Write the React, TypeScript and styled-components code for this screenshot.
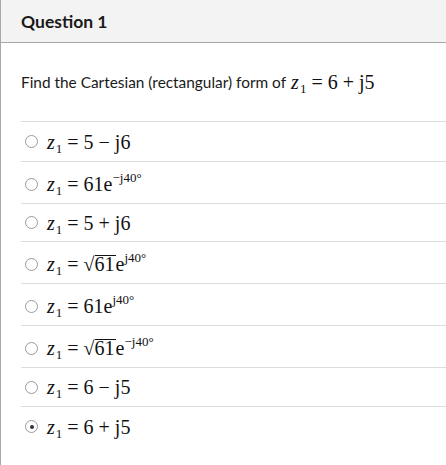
import React from "react";
import styled, { createGlobalStyle } from "styled-components";

const MATH_FONT = '"Liberation Serif", "Times New Roman", serif';
const UI_FONT = 'Lato, "Noto Sans", sans-serif';

const GlobalStyle = createGlobalStyle`
  html, body {
    margin: 0;
    padding: 0;
    background: #ffffff;
  }
  body {
    font-family: ${UI_FONT};
    color: #1a1a1a;
  }
`;

const Card = styled.div`
  width: 446px;
  height: 465px;
  box-sizing: border-box;
  border-left: 1px solid #a8a8a8;
  background: #ffffff;
`;

const Header = styled.div`
  height: 43px;
  box-sizing: border-box;
  padding: 0 0 0 20px;
  display: flex;
  align-items: center;
  background: #f3f3f3;
  border-bottom: 1px solid #a8a8a8;
  font-family: ${UI_FONT};
  font-weight: 700;
  font-size: 17.5px;
  color: #1a1a1a;
`;

const Body = styled.div`
  padding: 0 0 0 20px;
`;

const Prompt = styled.div`
  height: 78px;
  display: flex;
  align-items: center;
  font-family: ${UI_FONT};
  font-size: 15.4px;
  color: #1a1a1a;
  gap: 5px;
`;

const List = styled.div`
  display: flex;
  flex-direction: column;
`;

const Row = styled.div<{ $h: number; $tall?: boolean }>`
  display: flex;
  align-items: center;
  gap: 9px;
  height: ${(p) => p.$h}px;
  box-sizing: border-box;
  border-top: 1px solid #dcdcdc;
  padding-left: 4px;
  padding-top: ${(p) => (p.$tall ? 3 : 0)}px;
`;

const Radio = styled.span<{ $checked?: boolean }>`
  width: 13px;
  height: 13px;
  box-sizing: border-box;
  border-radius: 50%;
  border: 1px solid #9a9a9a;
  background: #ffffff;
  display: flex;
  align-items: center;
  justify-content: center;
  flex-shrink: 0;
  &::after {
    content: "";
    width: 4px;
    height: 4px;
    border-radius: 50%;
    background: #333;
    display: ${(p) => (p.$checked ? "block" : "none")};
  }
`;

const Formula = styled.span`
  font-family: ${MATH_FONT};
  font-size: 20px;
  line-height: 22px;
  color: #111;
  white-space: nowrap;
  display: inline-block;
`;

const Var = styled.i`
  font-style: italic;
`;

const Sub = styled.span`
  font-size: 13px;
  vertical-align: -4px;
  line-height: 0;
  margin-left: 1px;
`;

const Sup = styled.span`
  font-size: 13px;
  vertical-align: 9px;
  line-height: 0;
`;

const Op = styled.span`
  margin: 0 5px;
`;

const RootSign = styled.span`
  display: inline-block;
`;

const Radicand = styled.span`
  display: inline-block;
  border-top: 1.5px solid #111;
  line-height: 17px;
  padding: 0 1px 0 0;
`;

const Z1 = () => (
  <>
    <Var>z</Var>
    <Sub>1</Sub>
    <Op>=</Op>
  </>
);

const Sqrt61 = () => (
  <>
    <RootSign>√</RootSign>
    <Radicand>61</Radicand>
  </>
);

type Option = { body: React.ReactNode; h: number; tall?: boolean; checked?: boolean };

const options: Option[] = [
  { body: <>5<Op>−</Op>j6</>, h: 40 },
  { body: <>61e<Sup>−j40°</Sup></>, h: 42, tall: true },
  { body: <>5<Op>+</Op>j6</>, h: 38 },
  { body: <><Sqrt61 />e<Sup>j40°</Sup></>, h: 42, tall: true },
  { body: <>61e<Sup>j40°</Sup></>, h: 42, tall: true },
  { body: <><Sqrt61 />e<Sup>−j40°</Sup></>, h: 42, tall: true },
  { body: <>6<Op>−</Op>j5</>, h: 39 },
  { body: <>6<Op>+</Op>j5</>, h: 40, checked: true },
];

const App: React.FC = () => {
  return (
    <>
      <GlobalStyle />
      <Card>
        <Header>Question 1</Header>
        <Body>
          <Prompt>
            Find the Cartesian (rectangular) form of
            <Formula>
              <Z1 />6<Op>+</Op>j5
            </Formula>
          </Prompt>
          <List>
            {options.map((o, i) => (
              <Row key={i} $h={o.h} $tall={o.tall}>
                <Radio $checked={o.checked} />
                <Formula>
                  <Z1 />
                  {o.body}
                </Formula>
              </Row>
            ))}
          </List>
        </Body>
      </Card>
    </>
  );
};

export default App;
